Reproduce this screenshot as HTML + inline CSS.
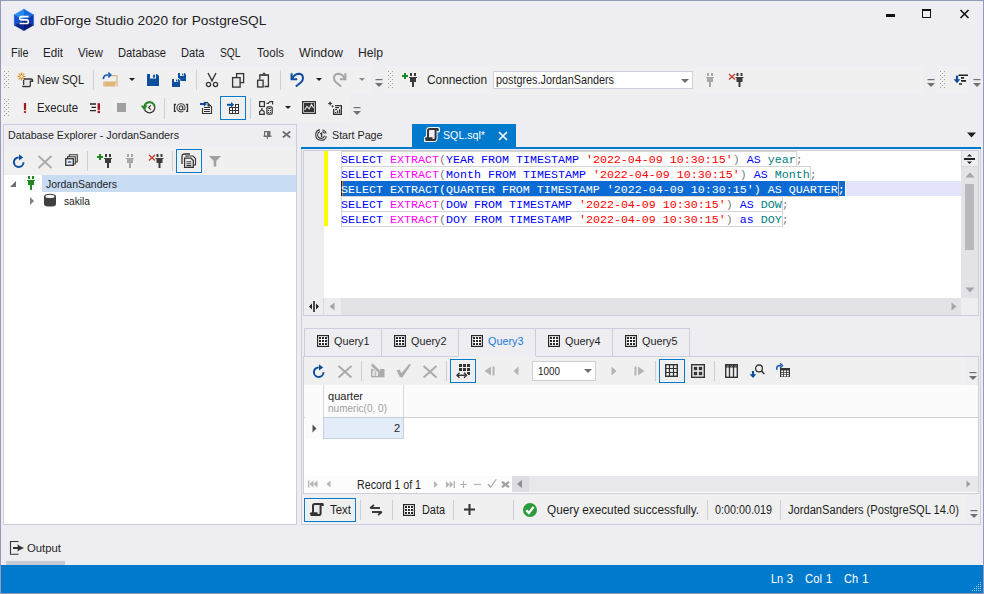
<!DOCTYPE html><html><head><meta charset="utf-8"><style>
*{margin:0;padding:0}
html,body{width:984px;height:594px;overflow:hidden;background:#EEEEF2}
body>div,body>span,body>svg{position:absolute;display:block}
.t{white-space:pre;position:absolute}
</style></head><body>
<div style="left:0px;top:0px;width:984px;height:594px;background:#EEEEF2"></div>
<svg style="left:13px;top:8px;" width="22" height="24" viewBox="0 0 22 24"><polygon points="10.9,11.9 1.2,6.7 10.9,0.9" fill="#2A8AEE" stroke="#2A8AEE" stroke-width="0.3"/><polygon points="10.9,11.9 10.9,0.9 20.6,6.7" fill="#1668DC" stroke="#1668DC" stroke-width="0.3"/><polygon points="10.9,11.9 1.2,17.3 1.2,6.7" fill="#1450D0" stroke="#1450D0" stroke-width="0.3"/><polygon points="10.9,11.9 20.6,6.7 20.6,17.3" fill="#0B3BB2" stroke="#0B3BB2" stroke-width="0.3"/><polygon points="10.9,11.9 10.9,22.8 1.2,17.3" fill="#0A2590" stroke="#0A2590" stroke-width="0.3"/><polygon points="10.9,11.9 20.6,17.3 10.9,22.8" fill="#071772" stroke="#071772" stroke-width="0.3"/><path d="M15.6 8.6 H8.8 Q6.7 8.6 6.7 10.3 Q6.7 11.9 8.8 11.9 H13.4 Q15.4 11.9 15.4 13.7 Q15.4 15.5 13.4 15.5 H6.5" fill="none" stroke="#fff" stroke-width="1.6"/></svg>
<span class="t" style="left:39.50px;top:14.00px;font-size:13.6px;line-height:13.6px;transform:scaleX(1.0087);transform-origin:0 0;color:#1E1E1E;font-family:'Liberation Sans', sans-serif;">dbForge Studio 2020 for PostgreSQL</span>
<div style="left:886px;top:14px;width:9px;height:3px;background:#111"></div>
<div style="left:922px;top:9px;width:9px;height:9px;border:1.5px solid #111;border-top-width:2.5px;box-sizing:border-box"></div>
<svg style="left:959px;top:9px;" width="11" height="10" viewBox="0 0 11 10"><path d="M1.5 1 L9.5 9 M9.5 1 L1.5 9" stroke="#111" stroke-width="1.6"/></svg>
<span class="t" style="left:10.50px;top:47.00px;font-size:12px;line-height:12px;transform:scaleX(0.9052);transform-origin:0 0;color:#1E1E1E;font-family:'Liberation Sans', sans-serif;">File</span>
<span class="t" style="left:43.00px;top:47.00px;font-size:12px;line-height:12px;transform:scaleX(0.9673);transform-origin:0 0;color:#1E1E1E;font-family:'Liberation Sans', sans-serif;">Edit</span>
<span class="t" style="left:78.00px;top:47.00px;font-size:12px;line-height:12px;transform:scaleX(0.9681);transform-origin:0 0;color:#1E1E1E;font-family:'Liberation Sans', sans-serif;">View</span>
<span class="t" style="left:118.00px;top:47.00px;font-size:12px;line-height:12px;transform:scaleX(0.9344);transform-origin:0 0;color:#1E1E1E;font-family:'Liberation Sans', sans-serif;">Database</span>
<span class="t" style="left:181.00px;top:47.00px;font-size:12px;line-height:12px;transform:scaleX(0.9268);transform-origin:0 0;color:#1E1E1E;font-family:'Liberation Sans', sans-serif;">Data</span>
<span class="t" style="left:220.00px;top:47.00px;font-size:12px;line-height:12px;transform:scaleX(0.8537);transform-origin:0 0;color:#1E1E1E;font-family:'Liberation Sans', sans-serif;">SQL</span>
<span class="t" style="left:257.00px;top:47.00px;font-size:12px;line-height:12px;transform:scaleX(0.9640);transform-origin:0 0;color:#1E1E1E;font-family:'Liberation Sans', sans-serif;">Tools</span>
<span class="t" style="left:299.00px;top:47.00px;font-size:12px;line-height:12px;transform:scaleX(1.0303);transform-origin:0 0;color:#1E1E1E;font-family:'Liberation Sans', sans-serif;">Window</span>
<span class="t" style="left:358.00px;top:47.00px;font-size:12px;line-height:12px;transform:scaleX(1.0128);transform-origin:0 0;color:#1E1E1E;font-family:'Liberation Sans', sans-serif;">Help</span>
<div style="left:1px;top:66px;width:371px;height:28px;background:#F0F0F0"></div>
<div style="left:385px;top:66px;width:539px;height:28px;background:#F0F0F0"></div>
<div style="left:937px;top:66px;width:32px;height:28px;background:#F0F0F0"></div>
<svg style="left:4px;top:71px;" width="5" height="17" viewBox="0 0 5 17"><rect x="0" y="0" width="1" height="1" fill="#A0A0A0"/><rect x="0" y="4" width="1" height="1" fill="#A0A0A0"/><rect x="0" y="8" width="1" height="1" fill="#A0A0A0"/><rect x="0" y="12" width="1" height="1" fill="#A0A0A0"/><rect x="0" y="16" width="1" height="1" fill="#A0A0A0"/><rect x="4" y="0" width="1" height="1" fill="#A0A0A0"/><rect x="4" y="4" width="1" height="1" fill="#A0A0A0"/><rect x="4" y="8" width="1" height="1" fill="#A0A0A0"/><rect x="4" y="12" width="1" height="1" fill="#A0A0A0"/><rect x="4" y="16" width="1" height="1" fill="#A0A0A0"/><rect x="2" y="2" width="1" height="1" fill="#A0A0A0"/><rect x="2" y="6" width="1" height="1" fill="#A0A0A0"/><rect x="2" y="10" width="1" height="1" fill="#A0A0A0"/><rect x="2" y="14" width="1" height="1" fill="#A0A0A0"/></svg>
<svg style="left:17px;top:72px;" width="17" height="17" viewBox="0 0 17 17"><g stroke="#D98A1C" stroke-width="1.2"><path d="M4.5 0.5 V8.5 M0.5 4.5 H8.5 M1.7 1.7 L7.3 7.3 M7.3 1.7 L1.7 7.3"/></g><circle cx="4.5" cy="4.5" r="1.3" fill="#F0F0F0"/><path d="M6.8 7 H14 Q15.5 7 15.5 8.3 V9.3 H13.2 V14.5" fill="none" stroke="#333" stroke-width="1.5"/><path d="M6.8 8 V13" stroke="#333" stroke-width="1.5"/><path d="M5 13.8 H12.5 Q13.2 13.8 13.2 14.5 V15.3 H6.5 Q5 15.3 5 14 Z" fill="#333"/><rect x="7.5" y="8" width="5" height="5.5" fill="#E4E4EA"/></svg>
<span class="t" style="left:37.00px;top:74.00px;font-size:12px;line-height:12px;transform:scaleX(0.9153);transform-origin:0 0;color:#1E1E1E;font-family:'Liberation Sans', sans-serif;">New SQL</span>
<div style="left:93px;top:70px;width:1px;height:20px;background:#CCCEDB"></div>
<svg style="left:102px;top:72px;" width="17" height="16" viewBox="0 0 17 16"><path d="M7.5 3.6 H15 V14.5" fill="none" stroke="#D8B27A" stroke-width="1.2"/><path d="M3.5 9.6 H14 L13 14.6 H2 Z" fill="#DDB678"/><path d="M1.3 9.8 L3.5 9.6 L2 14.6 L1.3 14.6 Z" fill="#DDB678"/><path d="M1.5 7.2 Q1 4 4.5 3 H8.5" fill="none" stroke="#1A5DB5" stroke-width="1.7"/><path d="M6.3 0.6 L8.8 3 L6.3 5.4" fill="none" stroke="#1A5DB5" stroke-width="1.5"/></svg>
<svg style="left:129px;top:78px;" width="6" height="4" viewBox="0 0 6 4"><path d="M0 0 H6 L3 3 Z" fill="#1E1E1E"/></svg>
<svg style="left:147px;top:74px;" width="12" height="12" viewBox="0 0 12 12"><path d="M0 0 H10 L12 2 V12 H0 Z" fill="#0D4F9E"/><rect x="3" y="0" width="6" height="4.5" fill="#F0F0F0"/><rect x="6" y="0.8" width="2" height="2.8" fill="#0D4F9E"/></svg>
<svg style="left:172px;top:73px;" width="15" height="14" viewBox="0 0 15 14"><path d="M6 0 H12.5 L14 1.5 V8 H6 Z" fill="#0D4F9E"/><rect x="8" y="0" width="4" height="3" fill="#F0F0F0"/><rect x="10" y="0.6" width="1.3" height="1.9" fill="#0D4F9E"/><path d="M-0.5 5.3 H7 L8.5 6.8 V14.5 H-0.5 Z" fill="#F0F0F0"/><path d="M0 6 H6.5 L8 7.5 V14 H0 Z" fill="#0D4F9E"/><rect x="2" y="6" width="4" height="3" fill="#F0F0F0"/><rect x="4" y="6.6" width="1.3" height="1.9" fill="#0D4F9E"/></svg>
<div style="left:196px;top:70px;width:1px;height:20px;background:#CCCEDB"></div>
<svg style="left:205px;top:72px;" width="14" height="16" viewBox="0 0 14 16"><path d="M3 1 L7.5 9.5 M11 1 L6.5 9.5" stroke="#333" stroke-width="1.4" fill="none"/><circle cx="3.5" cy="12.5" r="2.1" fill="none" stroke="#333" stroke-width="1.3"/><circle cx="10.5" cy="12.5" r="2.1" fill="none" stroke="#333" stroke-width="1.3"/></svg>
<svg style="left:231px;top:72px;" width="14" height="16" viewBox="0 0 14 16"><rect x="5.6" y="1.6" width="7" height="9" fill="none" stroke="#333" stroke-width="1.3"/><rect x="1.6" y="5.6" width="7.5" height="9.5" fill="#E9E9EE" stroke="#333" stroke-width="1.3"/></svg>
<svg style="left:256px;top:72px;" width="14" height="16" viewBox="0 0 14 16"><rect x="1.6" y="8.2" width="5.5" height="6.8" fill="#E9E9EE" stroke="#333" stroke-width="1.3"/><path d="M3.8 7.5 V3 H12.4 V14.5 H8.5" fill="none" stroke="#333" stroke-width="1.3"/><path d="M6.3 3 L8 1 L9.7 3 Z" fill="#E9E9EE" stroke="#333" stroke-width="1.1"/></svg>
<div style="left:280px;top:70px;width:1px;height:20px;background:#CCCEDB"></div>
<svg style="left:289px;top:72px;" width="16" height="16" viewBox="0 0 16 16"><path d="M2.6 1.2 V7.2 H8.2" fill="none" stroke="#0D4F9E" stroke-width="2.1"/><path d="M3 6.6 Q6 1.8 10 1.8 Q14 2.2 14 6.2 Q14 8.6 11.8 10.4 L6.8 14.6" fill="none" stroke="#0D4F9E" stroke-width="2"/></svg>
<svg style="left:316px;top:78px;" width="6" height="4" viewBox="0 0 6 4"><path d="M0 0 H6 L3 3 Z" fill="#1E1E1E"/></svg>
<svg style="left:332px;top:72px;" width="16" height="16" viewBox="0 0 16 16"><g transform="translate(16,0) scale(-1,1)"><path d="M2.6 1.2 V7.2 H8.2" fill="none" stroke="#A6A6A6" stroke-width="2.1"/><path d="M3 6.6 Q6 1.8 10 1.8 Q14 2.2 14 6.2 Q14 8.6 11.8 10.4 L6.8 14.6" fill="none" stroke="#A6A6A6" stroke-width="2"/></g></svg>
<svg style="left:359px;top:78px;" width="6" height="4" viewBox="0 0 6 4"><path d="M0 0 H6 L3 3 Z" fill="#8C8C8C"/></svg>
<div style="left:372px;top:66px;width:13px;height:28px;background:#EEEEF2"></div>
<svg style="left:375px;top:79px;" width="8" height="10" viewBox="0 0 8 10"><rect x="0.5" y="0" width="7" height="1.2" fill="#717171"/><path d="M0 4 H8 L4 8 Z" fill="#717171"/></svg>
<svg style="left:388px;top:71px;" width="5" height="17" viewBox="0 0 5 17"><rect x="0" y="0" width="1" height="1" fill="#A0A0A0"/><rect x="0" y="4" width="1" height="1" fill="#A0A0A0"/><rect x="0" y="8" width="1" height="1" fill="#A0A0A0"/><rect x="0" y="12" width="1" height="1" fill="#A0A0A0"/><rect x="0" y="16" width="1" height="1" fill="#A0A0A0"/><rect x="4" y="0" width="1" height="1" fill="#A0A0A0"/><rect x="4" y="4" width="1" height="1" fill="#A0A0A0"/><rect x="4" y="8" width="1" height="1" fill="#A0A0A0"/><rect x="4" y="12" width="1" height="1" fill="#A0A0A0"/><rect x="4" y="16" width="1" height="1" fill="#A0A0A0"/><rect x="2" y="2" width="1" height="1" fill="#A0A0A0"/><rect x="2" y="6" width="1" height="1" fill="#A0A0A0"/><rect x="2" y="10" width="1" height="1" fill="#A0A0A0"/><rect x="2" y="14" width="1" height="1" fill="#A0A0A0"/></svg>
<svg style="left:401px;top:73px;" width="16" height="14" viewBox="0 0 16 14"><path d="M1 3 H7 M4 0 V6" stroke="#1E8A1E" stroke-width="2"/><g fill="#3C3C3C" transform="translate(8,0)"><rect x="1" y="0" width="2" height="3"/><rect x="5" y="0" width="2" height="3"/><rect x="0" y="4" width="8" height="1"/><rect x="1" y="4" width="6" height="5"/><rect x="3" y="9" width="2" height="5"/></g></svg>
<span class="t" style="left:427.00px;top:74.00px;font-size:12px;line-height:12px;transform:scaleX(0.9883);transform-origin:0 0;color:#1E1E1E;font-family:'Liberation Sans', sans-serif;">Connection</span>
<div style="left:493px;top:71px;width:200px;height:18px;background:#fff;border:1px solid #CCCEDB;box-sizing:border-box"></div>
<span class="t" style="left:496.00px;top:74.00px;font-size:12px;line-height:12px;transform:scaleX(0.9025);transform-origin:0 0;color:#1E1E1E;font-family:'Liberation Sans', sans-serif;">postgres.JordanSanders</span>
<svg style="left:681px;top:79px;" width="8" height="5" viewBox="0 0 8 5"><path d="M0 0 H8 L4 4 Z" fill="#6E6E6E"/></svg>
<svg style="left:705px;top:73px;" width="10" height="15" viewBox="0 0 10 15"><g fill="#A8A8A8" transform="translate(1,0)"><rect x="1" y="0" width="2" height="3"/><rect x="5" y="0" width="2" height="3"/><rect x="0" y="4" width="8" height="1"/><rect x="1" y="4" width="6" height="5"/><rect x="3" y="9" width="2" height="5"/></g></svg>
<svg style="left:728px;top:73px;" width="16" height="14" viewBox="0 0 16 14"><path d="M1 1 L7 6.5 M7 1 L1 6.5" stroke="#C0392B" stroke-width="1.3"/><g fill="#3C3C3C" transform="translate(7.5,0)"><rect x="1" y="0" width="2" height="3"/><rect x="5" y="0" width="2" height="3"/><rect x="0" y="4" width="8" height="1"/><rect x="1" y="4" width="6" height="5"/><rect x="3" y="9" width="2" height="5"/></g></svg>
<div style="left:924px;top:66px;width:13px;height:28px;background:#EEEEF2"></div>
<svg style="left:927px;top:79px;" width="8" height="10" viewBox="0 0 8 10"><rect x="0.5" y="0" width="7" height="1.2" fill="#717171"/><path d="M0 4 H8 L4 8 Z" fill="#717171"/></svg>
<svg style="left:940px;top:71px;" width="5" height="17" viewBox="0 0 5 17"><rect x="0" y="0" width="1" height="1" fill="#A0A0A0"/><rect x="0" y="4" width="1" height="1" fill="#A0A0A0"/><rect x="0" y="8" width="1" height="1" fill="#A0A0A0"/><rect x="0" y="12" width="1" height="1" fill="#A0A0A0"/><rect x="0" y="16" width="1" height="1" fill="#A0A0A0"/><rect x="4" y="0" width="1" height="1" fill="#A0A0A0"/><rect x="4" y="4" width="1" height="1" fill="#A0A0A0"/><rect x="4" y="8" width="1" height="1" fill="#A0A0A0"/><rect x="4" y="12" width="1" height="1" fill="#A0A0A0"/><rect x="4" y="16" width="1" height="1" fill="#A0A0A0"/><rect x="2" y="2" width="1" height="1" fill="#A0A0A0"/><rect x="2" y="6" width="1" height="1" fill="#A0A0A0"/><rect x="2" y="10" width="1" height="1" fill="#A0A0A0"/><rect x="2" y="14" width="1" height="1" fill="#A0A0A0"/></svg>
<svg style="left:953px;top:73px;" width="16" height="13" viewBox="0 0 16 13"><path d="M5.5 2.2 H15 M8 4.9 H11 M8 7.9 H13 M6 11 H9" stroke="#222" stroke-width="1.6"/><path d="M4 2.6 V7.5" stroke="#0D4F9E" stroke-width="2.2"/><path d="M0.6 6.3 H7.4 L4 10.3 Z" fill="#0D4F9E"/></svg>
<svg style="left:973px;top:79px;" width="8" height="10" viewBox="0 0 8 10"><rect x="0.5" y="0" width="7" height="1.2" fill="#717171"/><path d="M0 4 H8 L4 8 Z" fill="#717171"/></svg>
<div style="left:1px;top:94px;width:349px;height:28px;background:#F0F0F0"></div>
<svg style="left:4px;top:99px;" width="5" height="17" viewBox="0 0 5 17"><rect x="0" y="0" width="1" height="1" fill="#A0A0A0"/><rect x="0" y="4" width="1" height="1" fill="#A0A0A0"/><rect x="0" y="8" width="1" height="1" fill="#A0A0A0"/><rect x="0" y="12" width="1" height="1" fill="#A0A0A0"/><rect x="0" y="16" width="1" height="1" fill="#A0A0A0"/><rect x="4" y="0" width="1" height="1" fill="#A0A0A0"/><rect x="4" y="4" width="1" height="1" fill="#A0A0A0"/><rect x="4" y="8" width="1" height="1" fill="#A0A0A0"/><rect x="4" y="12" width="1" height="1" fill="#A0A0A0"/><rect x="4" y="16" width="1" height="1" fill="#A0A0A0"/><rect x="2" y="2" width="1" height="1" fill="#A0A0A0"/><rect x="2" y="6" width="1" height="1" fill="#A0A0A0"/><rect x="2" y="10" width="1" height="1" fill="#A0A0A0"/><rect x="2" y="14" width="1" height="1" fill="#A0A0A0"/></svg>
<svg style="left:23px;top:102px;" width="4" height="12" viewBox="0 0 4 12"><rect x="0.9" y="1" width="2.2" height="7" fill="#A61B0E"/><rect x="0.9" y="9.1" width="2.2" height="1.8" fill="#A61B0E"/></svg>
<span class="t" style="left:37.00px;top:102.00px;font-size:12px;line-height:12px;transform:scaleX(0.9457);transform-origin:0 0;color:#1E1E1E;font-family:'Liberation Sans', sans-serif;">Execute</span>
<svg style="left:89px;top:102px;" width="13" height="12" viewBox="0 0 13 12"><path d="M1 2 H7 M2.5 5.4 H7 M1 8.6 H7" stroke="#222" stroke-width="1.3"/><rect x="8.6" y="1.2" width="2.4" height="6.6" fill="#A31515"/><rect x="8.6" y="8.8" width="2.4" height="2.3" fill="#A31515"/></svg>
<div style="left:117px;top:103px;width:9px;height:9px;background:#A0A0A0"></div>
<svg style="left:139px;top:100px;" width="18" height="15" viewBox="0 0 18 15"><circle cx="10.5" cy="7.5" r="5.3" fill="#F0F0F0" stroke="#333" stroke-width="1.2"/><path d="M11.8 5.3 L9.6 7.5 L11.8 9.7" fill="none" stroke="#333" stroke-width="1.1"/><path d="M15.6 6.5 A5.3 5.3 0 0 0 5.5 5.5" fill="none" stroke="#2A8A2A" stroke-width="1.9"/><path d="M1.8 5.8 L8.5 5.2 L5.6 10.8 Z" fill="#2A8A2A"/></svg>
<div style="left:164px;top:98px;width:1px;height:21px;background:#CCCEDB"></div>
<svg style="left:173px;top:102px;" width="16" height="11" viewBox="0 0 16 11"><path d="M3 2.5 H1.5 V9.4 H3 M13 2.5 H14.5 V9.4 H13" fill="none" stroke="#333" stroke-width="1.3"/><path d="M10.3 9.2 Q8.9 9.9 8 9.9 A4.1 4.1 0 1 1 12.1 5.8 Q12.1 8 10.8 8 Q9.8 8 9.8 6.8 V3.8" fill="none" stroke="#444" stroke-width="1.1"/><ellipse cx="7.9" cy="5.9" rx="1.7" ry="2" fill="none" stroke="#444" stroke-width="1.1"/></svg>
<svg style="left:199px;top:100px;" width="14" height="15" viewBox="0 0 14 15"><path d="M3.5 8 V13.5 H12.5 V6" fill="none" stroke="#333" stroke-width="1.1"/><path d="M8.5 2 L13 6.5 H8.5 Z" fill="#333"/><path d="M9 2.5 H5.5" stroke="#333" stroke-width="1.1"/><path d="M5 7.5 H11 M5 9.5 H11 M5 11.5 H11" stroke="#333" stroke-width="1"/><path d="M1 4 H5.5" stroke="#0D4F9E" stroke-width="2"/><path d="M4.8 1.2 L8 4 L4.8 6.8 Z" fill="#0D4F9E"/></svg>
<div style="left:220px;top:96px;width:26px;height:24px;border:1px solid #007ACC;box-sizing:border-box;background:#EFEFEF;box-shadow:inset 0 0 0 1px #F6F2EE"></div>
<svg style="left:227px;top:100px;" width="13" height="15" viewBox="0 0 13 15"><path d="M8 4 H12 V14 H2 V7 H8 Z" fill="#333"/><rect x="9" y="5" width="2" height="2" fill="#fff"/><rect x="3" y="8" width="2" height="2" fill="#fff"/><rect x="6" y="8" width="2" height="2" fill="#fff"/><rect x="9" y="8" width="2" height="2" fill="#fff"/><rect x="3" y="11" width="2" height="2" fill="#fff"/><rect x="6" y="11" width="2" height="2" fill="#fff"/><rect x="9" y="11" width="2" height="2" fill="#fff"/><path d="M0 4.8 H4.5" stroke="#0D4F9E" stroke-width="2"/><path d="M4 2 L7.2 4.8 L4 7.6 Z" fill="#0D4F9E"/></svg>
<div style="left:250px;top:98px;width:1px;height:21px;background:#CCCEDB"></div>
<svg style="left:258px;top:100px;" width="16" height="16" viewBox="0 0 16 16"><g fill="none" stroke="#333" stroke-width="1.2"><rect x="1.6" y="1.6" width="4.8" height="4.9"/><path d="M1.6 14.4 V11.8 L3.9 9.6 L6.2 11.8 V14.4 Z M3.9 8 V9.8"/><path d="M8.5 3.4 H10.2 L12 1.6 H14.6 V4.6"/><rect x="8.9" y="6.9" width="5.3" height="7.3" rx="1.1"/><path d="M10.3 8.5 H12.6" stroke-width="1"/></g><circle cx="10.5" cy="10.4" r="0.65" fill="#333"/><circle cx="10.5" cy="12.4" r="0.65" fill="#333"/><circle cx="12.5" cy="10.4" r="0.65" fill="#333"/><circle cx="12.5" cy="12.4" r="0.65" fill="#333"/></svg>
<svg style="left:285px;top:106px;" width="6" height="4" viewBox="0 0 6 4"><path d="M0 0 H6 L3 3 Z" fill="#1E1E1E"/></svg>
<svg style="left:301px;top:100px;" width="16" height="15" viewBox="0 0 16 15"><rect x="1" y="1" width="14" height="13" fill="#333"/><rect x="2.3" y="2.3" width="11.4" height="10.4" fill="#F0F0F0"/><rect x="3" y="3" width="10" height="9" fill="#333"/><path d="M3.6 10 L6 6.3 L8.2 8.8 L10.5 4.5 L12.5 8" fill="none" stroke="#E8E8E8" stroke-width="1.1"/></svg>
<svg style="left:327px;top:101px;" width="17" height="15" viewBox="0 0 17 15"><path d="M3.1 0 Q3.5 2.1 5.6 2.5 Q3.5 2.9 3.1 5 Q2.7 2.9 0.6 2.5 Q2.7 2.1 3.1 0 Z" fill="#333"/><path d="M5.6 4 L6.9 5.3 L5.6 6.6 L4.3 5.3 Z" fill="#333"/><path d="M8 4.65 H14.35 V13.35 H6.65 V8" fill="none" stroke="#333" stroke-width="1.3"/><path d="M8.2 6.6 H12 M8.2 8.6 H10" stroke="#333" stroke-width="1.1"/><rect x="8" y="11" width="1.3" height="1.3" fill="#333"/><rect x="10" y="9.6" width="1.2" height="2.8" fill="#333"/><rect x="12" y="8.2" width="1.2" height="4.2" fill="#333"/></svg>
<div style="left:350px;top:94px;width:16px;height:28px;background:#EEEEF2"></div>
<svg style="left:353px;top:107px;" width="8" height="10" viewBox="0 0 8 10"><rect x="0.5" y="0" width="7" height="1.2" fill="#717171"/><path d="M0 4 H8 L4 8 Z" fill="#717171"/></svg>
<div style="left:3px;top:124px;width:294px;height:401px;border:1px solid #CCCEDB;box-sizing:border-box;background:#fff"></div>
<div style="left:4px;top:125px;width:292px;height:21px;background:#EEEEF2"></div>
<span class="t" style="left:8.00px;top:130.00px;font-size:11px;line-height:11px;transform:scaleX(0.9745);transform-origin:0 0;color:#1E1E1E;font-family:'Liberation Sans', sans-serif;">Database Explorer - JordanSanders</span>
<svg style="left:263px;top:131px;" width="9" height="8" viewBox="0 0 9 8"><rect x="1.6" y="0.6" width="5.3" height="4.8" fill="none" stroke="#6E6E6E" stroke-width="1.2"/><rect x="4" y="0.6" width="2.9" height="4.8" fill="#6E6E6E"/><path d="M0.5 5.3 H8.5" stroke="#6E6E6E" stroke-width="1.3"/><path d="M4.3 5.3 V8" stroke="#6E6E6E" stroke-width="1.2"/></svg>
<svg style="left:282px;top:131px;" width="9" height="7" viewBox="0 0 9 7"><path d="M0.8 0.5 L8.2 6.5 M8.2 0.5 L0.8 6.5" stroke="#6E6E6E" stroke-width="1.8"/></svg>
<div style="left:4px;top:146px;width:292px;height:29px;background:#F0F0F0"></div>
<svg style="left:12px;top:154px;" width="14" height="15" viewBox="0 0 14 15"><path d="M11.5 8.2 A4.8 4.8 0 1 1 6.7 3.4" fill="none" stroke="#0D4F9E" stroke-width="2"/><path d="M7 0.2 L11.2 3.4 L7 6.6 Z" fill="#0D4F9E"/></svg>
<svg style="left:37px;top:155px;" width="16" height="14" viewBox="0 0 16 14"><path d="M1.5 1 L14.5 13 M14.5 1 L1.5 13" stroke="#ABABAB" stroke-width="1.9"/></svg>
<svg style="left:65px;top:154px;" width="13" height="12" viewBox="0 0 13 12"><path d="M4.3 3 V0.7 H12.3 V8 H10.5" fill="none" stroke="#333" stroke-width="1.1"/><path d="M2.5 5 V2.7 H10.3 V10 H8" fill="none" stroke="#333" stroke-width="1.1"/><rect x="0.7" y="4.7" width="7.6" height="6.6" fill="#F0F0F0" stroke="#333" stroke-width="1.3"/><path d="M2.8 8 H6.2" stroke="#1A5DB5" stroke-width="1.4"/></svg>
<div style="left:87px;top:151px;width:1px;height:20px;background:#CCCEDB"></div>
<svg style="left:96px;top:154px;" width="16" height="14" viewBox="0 0 16 14"><path d="M1 3 H7 M4 0 V6" stroke="#1E8A1E" stroke-width="2"/><g fill="#3C3C3C" transform="translate(8,0)"><rect x="1" y="0" width="2" height="3"/><rect x="5" y="0" width="2" height="3"/><rect x="0" y="4" width="8" height="1"/><rect x="1" y="4" width="6" height="5"/><rect x="3" y="9" width="2" height="5"/></g></svg>
<svg style="left:125px;top:154px;" width="10" height="15" viewBox="0 0 10 15"><g fill="#A8A8A8" transform="translate(1,0)"><rect x="1" y="0" width="2" height="3"/><rect x="5" y="0" width="2" height="3"/><rect x="0" y="4" width="8" height="1"/><rect x="1" y="4" width="6" height="5"/><rect x="3" y="9" width="2" height="5"/></g></svg>
<svg style="left:148px;top:154px;" width="16" height="14" viewBox="0 0 16 14"><path d="M1 1 L7 6.5 M7 1 L1 6.5" stroke="#C0392B" stroke-width="1.3"/><g fill="#3C3C3C" transform="translate(7.5,0)"><rect x="1" y="0" width="2" height="3"/><rect x="5" y="0" width="2" height="3"/><rect x="0" y="4" width="8" height="1"/><rect x="1" y="4" width="6" height="5"/><rect x="3" y="9" width="2" height="5"/></g></svg>
<div style="left:172px;top:151px;width:1px;height:20px;background:#CCCEDB"></div>
<div style="left:176px;top:149px;width:26px;height:24px;border:1px solid #007ACC;box-sizing:border-box;background:#EFEFEF;box-shadow:inset 0 0 0 1px #F6F2EE"></div>
<svg style="left:181px;top:153px;" width="16" height="15" viewBox="0 0 16 15"><path d="M1 11 V3.5 Q1 1 3.5 1 H9" fill="none" stroke="#333" stroke-width="1.3"/><path d="M5 4 V3 H12 L14.5 5.5 V12 H13" fill="none" stroke="#333" stroke-width="1.1"/><path d="M3.6 5.2 H10 L12.3 7.5 V14.3 H3.6 Z" fill="#EFEFEF" stroke="#333" stroke-width="1.3"/><path d="M5.5 8.8 H10.3 M5.5 10.8 H10.3 M5.5 12.6 H10.3" stroke="#333" stroke-width="1.1"/></svg>
<svg style="left:209px;top:156px;" width="12" height="11" viewBox="0 0 12 11"><path d="M0 0 H12 L7.3 5 V10.5 H4.7 V5 Z" fill="#A0A0A0"/></svg>
<div style="left:42px;top:175px;width:254px;height:17px;background:#C8DCF4"></div>
<svg style="left:10px;top:181px;" width="7" height="6" viewBox="0 0 7 6"><path d="M6 0 V6 H0 Z" fill="#6E6E6E"/></svg>
<svg style="left:27px;top:176px;" width="9" height="15" viewBox="0 0 9 15"><g fill="#1E8A1E"><rect x="1" y="0" width="2" height="3"/><rect x="5" y="0" width="2" height="3"/><rect x="0" y="4" width="8" height="1"/><rect x="1" y="4" width="6" height="5"/><rect x="3" y="9" width="2" height="5"/></g></svg>
<span class="t" style="left:46.00px;top:179.00px;font-size:11px;line-height:11px;transform:scaleX(0.9517);transform-origin:0 0;color:#1E1E1E;font-family:'Liberation Sans', sans-serif;">JordanSanders</span>
<svg style="left:30px;top:197px;" width="4" height="8" viewBox="0 0 4 8"><path d="M0 0 L4 4 L0 8 Z" fill="#808080"/></svg>
<svg style="left:43px;top:193px;" width="14" height="14" viewBox="0 0 14 14"><path d="M1 3 V11 Q1 13.6 7 13.6 Q13 13.6 13 11 V3 Z" fill="#404040"/><ellipse cx="7" cy="3.3" rx="6" ry="2.6" fill="#404040"/><ellipse cx="7" cy="3.4" rx="4.6" ry="1.6" fill="#F4F4F4"/></svg>
<span class="t" style="left:64.00px;top:196.00px;font-size:11px;line-height:11px;transform:scaleX(0.9240);transform-origin:0 0;color:#1E1E1E;font-family:'Liberation Sans', sans-serif;">sakila</span>
<svg style="left:314px;top:128px;" width="14" height="14" viewBox="0 0 14 14"><path d="M12.38 8.02 A5.4 5.4 0 1 1 5.98 1.62 M8.50 1.68 A5.4 5.4 0 0 1 12.32 5.50 M10.52 7.63 A3.5 3.5 0 1 1 5.90 3.61" fill="none" stroke="#3A3A3A" stroke-width="1.1"/><path d="M8.6 3.3 L10.6 5.3" stroke="#3A3A3A" stroke-width="1.1"/><path d="M6.1 6 L7.6 5.2 V9" fill="none" stroke="#333" stroke-width="1.3"/></svg>
<span class="t" style="left:331.50px;top:130.00px;font-size:11px;line-height:11px;transform:scaleX(0.9716);transform-origin:0 0;color:#1E1E1E;font-family:'Liberation Sans', sans-serif;">Start Page</span>
<div style="left:412px;top:124px;width:104px;height:23px;background:#007ACC"></div>
<svg style="left:424px;top:127px;" width="16" height="15" viewBox="0 0 16 15"><path d="M4 10.5 V3.8 Q4 2 5.8 2 H13.2 M11.6 3 V11.3 Q11.6 13.1 9.8 13.1 H1.5 M1.6 12.3 Q1.6 11.3 2.8 11.3 H8.5" fill="none" stroke="#F4F6FA" stroke-width="4" stroke-linecap="round"/><rect x="11" y="0" width="5" height="5.5" rx="1.5" fill="#F4F6FA"/><rect x="5" y="3" width="5.8" height="8.5" fill="#EEEEF2"/><path d="M4 10.5 V3.8 Q4 2 5.8 2 H13.2 M11.6 3 V11.3 Q11.6 13.1 9.8 13.1 H1.5 M1.6 12.3 Q1.6 11.3 2.8 11.3 H8.5" fill="none" stroke="#333" stroke-width="2"/><path d="M12.5 1 H13.6 Q14.7 1 14.7 2.2 V4 H12.5 Z" fill="#333"/></svg>
<span class="t" style="left:443.00px;top:130.00px;font-size:11px;line-height:11px;transform:scaleX(0.9676);transform-origin:0 0;color:#fff;font-family:'Liberation Sans', sans-serif;">SQL.sql*</span>
<svg style="left:498px;top:131px;" width="10" height="10" viewBox="0 0 10 10"><path d="M1 1 L9 9 M9 1 L1 9" stroke="#fff" stroke-width="1.7"/></svg>
<svg style="left:967px;top:132px;" width="9" height="6" viewBox="0 0 9 6"><path d="M0 0.5 H9 L4.5 5.5 Z" fill="#1E1E1E"/></svg>
<div style="left:301px;top:147px;width:680px;height:2px;background:#007ACC"></div>
<div style="left:301px;top:149px;width:680px;height:376px;background:#EEEEF2"></div>
<div style="left:301px;top:149px;width:1px;height:376px;background:#CCCEDB"></div>
<div style="left:980px;top:149px;width:1px;height:376px;background:#CCCEDB"></div>
<div style="left:301px;top:524px;width:680px;height:1px;background:#CCCEDB"></div>
<div style="left:303px;top:150px;width:676px;height:166px;border:1px solid #CCCEDB;box-sizing:border-box;background:#fff"></div>
<div style="left:304px;top:151px;width:20px;height:147px;background:#EEEEF2"></div>
<div style="left:324px;top:151px;width:4px;height:75px;background:#FFFF00"></div>
<div style="left:846px;top:181px;width:115px;height:15px;background:#E3E3FB"></div>
<div style="left:341px;top:151px;width:456px;height:16px;border:1px solid #D4D4D4;box-sizing:border-box"></div>
<div style="left:341px;top:166px;width:470px;height:16px;border:1px solid #D4D4D4;box-sizing:border-box"></div>
<div style="left:341px;top:181px;width:498px;height:16px;border:1px solid #D4D4D4;box-sizing:border-box"></div>
<div style="left:341px;top:196px;width:442px;height:16px;border:1px solid #D4D4D4;box-sizing:border-box"></div>
<div style="left:341px;top:211px;width:442px;height:16px;border:1px solid #D4D4D4;box-sizing:border-box"></div>
<div style="left:341px;top:181px;width:504px;height:15px;background:#0B6AD3"></div>
<div style="left:838px;top:181px;width:1px;height:16px;background:#CFC6B8"></div>
<div style="left:341px;top:181px;width:2px;height:15px;background:#E07A2A;border-left:1px solid #222;box-sizing:border-box"></div>
<span class="t" style="left:341px;top:155.0px;font-size:11.67px;line-height:11.67px;font-family:'Liberation Mono', monospace;"><b style="color:#0000FF;font-weight:normal">SELECT</b> <b style="color:#FF00FF;font-weight:normal">EXTRACT</b><b style="color:#808080;font-weight:normal">(</b><b style="color:#0000FF;font-weight:normal">YEAR</b> <b style="color:#0000FF;font-weight:normal">FROM</b> <b style="color:#0000FF;font-weight:normal">TIMESTAMP</b> <b style="color:#FF0000;font-weight:normal">'2022-04-09 10:30:15'</b><b style="color:#808080;font-weight:normal">)</b> <b style="color:#0000FF;font-weight:normal">AS</b> <b style="color:#008080;font-weight:normal">year</b><b style="color:#808080;font-weight:normal">;</b></span>
<span class="t" style="left:341px;top:170.0px;font-size:11.67px;line-height:11.67px;font-family:'Liberation Mono', monospace;"><b style="color:#0000FF;font-weight:normal">SELECT</b> <b style="color:#FF00FF;font-weight:normal">EXTRACT</b><b style="color:#808080;font-weight:normal">(</b><b style="color:#0000FF;font-weight:normal">Month</b> <b style="color:#0000FF;font-weight:normal">FROM</b> <b style="color:#0000FF;font-weight:normal">TIMESTAMP</b> <b style="color:#FF0000;font-weight:normal">'2022-04-09 10:30:15'</b><b style="color:#808080;font-weight:normal">)</b> <b style="color:#0000FF;font-weight:normal">AS</b> <b style="color:#008080;font-weight:normal">Month</b><b style="color:#808080;font-weight:normal">;</b></span>
<span class="t" style="left:341px;top:185.0px;font-size:11.67px;line-height:11.67px;font-family:'Liberation Mono', monospace;color:#fff">SELECT EXTRACT(QUARTER FROM TIMESTAMP '2022-04-09 10:30:15') AS QUARTER;</span>
<span class="t" style="left:341px;top:200.0px;font-size:11.67px;line-height:11.67px;font-family:'Liberation Mono', monospace;"><b style="color:#0000FF;font-weight:normal">SELECT</b> <b style="color:#FF00FF;font-weight:normal">EXTRACT</b><b style="color:#808080;font-weight:normal">(</b><b style="color:#0000FF;font-weight:normal">DOW</b> <b style="color:#0000FF;font-weight:normal">FROM</b> <b style="color:#0000FF;font-weight:normal">TIMESTAMP</b> <b style="color:#FF0000;font-weight:normal">'2022-04-09 10:30:15'</b><b style="color:#808080;font-weight:normal">)</b> <b style="color:#0000FF;font-weight:normal">AS</b> <b style="color:#008080;font-weight:normal">DOW</b><b style="color:#808080;font-weight:normal">;</b></span>
<span class="t" style="left:341px;top:215.0px;font-size:11.67px;line-height:11.67px;font-family:'Liberation Mono', monospace;"><b style="color:#0000FF;font-weight:normal">SELECT</b> <b style="color:#FF00FF;font-weight:normal">EXTRACT</b><b style="color:#808080;font-weight:normal">(</b><b style="color:#0000FF;font-weight:normal">DOY</b> <b style="color:#0000FF;font-weight:normal">FROM</b> <b style="color:#0000FF;font-weight:normal">TIMESTAMP</b> <b style="color:#FF0000;font-weight:normal">'2022-04-09 10:30:15'</b><b style="color:#808080;font-weight:normal">)</b> <b style="color:#0000FF;font-weight:normal">as</b> <b style="color:#008080;font-weight:normal">DOY</b><b style="color:#808080;font-weight:normal">;</b></span>
<div style="left:961px;top:151px;width:17px;height:147px;background:#E2E2E7"></div>
<div style="left:961px;top:151px;width:17px;height:16px;background:#EEEEF2;border-left:1px solid #D8D8E0;border-bottom:1px solid #D8D8E0;box-sizing:border-box"></div>
<svg style="left:963px;top:153px;" width="13" height="12" viewBox="0 0 13 12"><path d="M6.5 1 L9 3.5 H4 Z" fill="#222"/><rect x="1" y="5" width="11" height="2" fill="#222"/><path d="M4 8.5 H9 L6.5 11 Z" fill="#222"/></svg>
<svg style="left:965px;top:172px;" width="10" height="6" viewBox="0 0 10 6"><path d="M0.5 5.5 L5 0.5 L9.5 5.5 Z" fill="#A4A4AC"/></svg>
<div style="left:965px;top:184px;width:9px;height:66px;background:#B9B9BD"></div>
<svg style="left:965px;top:287px;" width="10" height="6" viewBox="0 0 10 6"><path d="M0.5 0.5 H9.5 L5 5.5 Z" fill="#A4A4AC"/></svg>
<div style="left:304px;top:298px;width:674px;height:17px;background:#E2E2E7"></div>
<div style="left:304px;top:298px;width:20px;height:17px;background:#EEEEF2;border-right:1px solid #D8D8E0;box-sizing:border-box"></div>
<svg style="left:309px;top:301px;" width="10" height="11" viewBox="0 0 10 11"><path d="M3 2.5 V8.5 L0 5.5 Z M7 2.5 V8.5 L10 5.5 Z" fill="#222"/><rect x="4.2" y="0" width="1.6" height="11" fill="#222"/></svg>
<div style="left:324px;top:298px;width:17px;height:17px;background:#EDEDF0"></div>
<svg style="left:329px;top:302px;" width="6" height="9" viewBox="0 0 6 9"><path d="M5.5 0.5 V8.5 L0.5 4.5 Z" fill="#A4A4AC"/></svg>
<svg style="left:951px;top:302px;" width="6" height="9" viewBox="0 0 6 9"><path d="M0.5 0.5 V8.5 L5.5 4.5 Z" fill="#A4A4AC"/></svg>
<div style="left:961px;top:298px;width:17px;height:17px;background:#EEEEF2"></div>
<div style="left:304px;top:328px;width:78px;height:29px;background:#EEEEF2;border:1px solid #CCCEDB;box-sizing:border-box"></div>
<svg style="left:317px;top:335px;" width="12" height="12" viewBox="0 0 12 12"><rect x="0.6" y="0.6" width="10.8" height="10.8" fill="#fff" stroke="#262626" stroke-width="1.2"/><rect x="2" y="2" width="2" height="2" fill="#262626"/><rect x="2" y="5" width="2" height="2" fill="#262626"/><rect x="2" y="8" width="2" height="2" fill="#262626"/><rect x="5" y="2" width="2" height="2" fill="#262626"/><rect x="5" y="5" width="2" height="2" fill="#262626"/><rect x="5" y="8" width="2" height="2" fill="#262626"/><rect x="8" y="2" width="2" height="2" fill="#262626"/><rect x="8" y="5" width="2" height="2" fill="#262626"/><rect x="8" y="8" width="2" height="2" fill="#262626"/></svg>
<span class="t" style="left:333.50px;top:336.00px;font-size:11px;line-height:11px;transform:scaleX(0.9842);transform-origin:0 0;color:#1E1E1E;font-family:'Liberation Sans', sans-serif;">Query1</span>
<div style="left:381px;top:328px;width:78px;height:29px;background:#EEEEF2;border:1px solid #CCCEDB;box-sizing:border-box"></div>
<svg style="left:394px;top:335px;" width="12" height="12" viewBox="0 0 12 12"><rect x="0.6" y="0.6" width="10.8" height="10.8" fill="#fff" stroke="#262626" stroke-width="1.2"/><rect x="2" y="2" width="2" height="2" fill="#262626"/><rect x="2" y="5" width="2" height="2" fill="#262626"/><rect x="2" y="8" width="2" height="2" fill="#262626"/><rect x="5" y="2" width="2" height="2" fill="#262626"/><rect x="5" y="5" width="2" height="2" fill="#262626"/><rect x="5" y="8" width="2" height="2" fill="#262626"/><rect x="8" y="2" width="2" height="2" fill="#262626"/><rect x="8" y="5" width="2" height="2" fill="#262626"/><rect x="8" y="8" width="2" height="2" fill="#262626"/></svg>
<span class="t" style="left:410.50px;top:336.00px;font-size:11px;line-height:11px;transform:scaleX(0.9842);transform-origin:0 0;color:#1E1E1E;font-family:'Liberation Sans', sans-serif;">Query2</span>
<div style="left:458px;top:328px;width:78px;height:29px;background:#EEEEF2;border:1px solid #CCCEDB;border-bottom:none;box-sizing:border-box"></div>
<svg style="left:471px;top:335px;" width="12" height="12" viewBox="0 0 12 12"><rect x="0.6" y="0.6" width="10.8" height="10.8" fill="#fff" stroke="#262626" stroke-width="1.2"/><rect x="2" y="2" width="2" height="2" fill="#262626"/><rect x="2" y="5" width="2" height="2" fill="#262626"/><rect x="2" y="8" width="2" height="2" fill="#262626"/><rect x="5" y="2" width="2" height="2" fill="#262626"/><rect x="5" y="5" width="2" height="2" fill="#262626"/><rect x="5" y="8" width="2" height="2" fill="#262626"/><rect x="8" y="2" width="2" height="2" fill="#262626"/><rect x="8" y="5" width="2" height="2" fill="#262626"/><rect x="8" y="8" width="2" height="2" fill="#262626"/></svg>
<span class="t" style="left:487.50px;top:336.00px;font-size:11px;line-height:11px;transform:scaleX(0.9842);transform-origin:0 0;color:#1C7CD6;font-family:'Liberation Sans', sans-serif;">Query3</span>
<div style="left:535px;top:328px;width:78px;height:29px;background:#EEEEF2;border:1px solid #CCCEDB;box-sizing:border-box"></div>
<svg style="left:548px;top:335px;" width="12" height="12" viewBox="0 0 12 12"><rect x="0.6" y="0.6" width="10.8" height="10.8" fill="#fff" stroke="#262626" stroke-width="1.2"/><rect x="2" y="2" width="2" height="2" fill="#262626"/><rect x="2" y="5" width="2" height="2" fill="#262626"/><rect x="2" y="8" width="2" height="2" fill="#262626"/><rect x="5" y="2" width="2" height="2" fill="#262626"/><rect x="5" y="5" width="2" height="2" fill="#262626"/><rect x="5" y="8" width="2" height="2" fill="#262626"/><rect x="8" y="2" width="2" height="2" fill="#262626"/><rect x="8" y="5" width="2" height="2" fill="#262626"/><rect x="8" y="8" width="2" height="2" fill="#262626"/></svg>
<span class="t" style="left:564.50px;top:336.00px;font-size:11px;line-height:11px;transform:scaleX(0.9842);transform-origin:0 0;color:#1E1E1E;font-family:'Liberation Sans', sans-serif;">Query4</span>
<div style="left:612px;top:328px;width:78px;height:29px;background:#EEEEF2;border:1px solid #CCCEDB;box-sizing:border-box"></div>
<svg style="left:625px;top:335px;" width="12" height="12" viewBox="0 0 12 12"><rect x="0.6" y="0.6" width="10.8" height="10.8" fill="#fff" stroke="#262626" stroke-width="1.2"/><rect x="2" y="2" width="2" height="2" fill="#262626"/><rect x="2" y="5" width="2" height="2" fill="#262626"/><rect x="2" y="8" width="2" height="2" fill="#262626"/><rect x="5" y="2" width="2" height="2" fill="#262626"/><rect x="5" y="5" width="2" height="2" fill="#262626"/><rect x="5" y="8" width="2" height="2" fill="#262626"/><rect x="8" y="2" width="2" height="2" fill="#262626"/><rect x="8" y="5" width="2" height="2" fill="#262626"/><rect x="8" y="8" width="2" height="2" fill="#262626"/></svg>
<span class="t" style="left:641.50px;top:336.00px;font-size:11px;line-height:11px;transform:scaleX(0.9842);transform-origin:0 0;color:#1E1E1E;font-family:'Liberation Sans', sans-serif;">Query5</span>
<div style="left:303px;top:356px;width:676px;height:138px;border:1px solid #CCCEDB;box-sizing:border-box;background:#fff"></div>
<div style="left:458px;top:356px;width:78px;height:1px;background:#EEEEF2"></div>
<div style="left:304px;top:357px;width:674px;height:28px;background:#F0F0F0"></div>
<div style="left:965px;top:357px;width:13px;height:28px;background:#EEEEF2"></div>
<svg style="left:312px;top:364px;" width="14" height="15" viewBox="0 0 14 15"><path d="M11.5 8.2 A4.8 4.8 0 1 1 6.7 3.4" fill="none" stroke="#0D4F9E" stroke-width="2"/><path d="M7 0.2 L11.2 3.4 L7 6.6 Z" fill="#0D4F9E"/></svg>
<svg style="left:337px;top:365px;" width="16" height="13" viewBox="0 0 16 13"><path d="M1.5 1 L14.5 12.5 M14.5 1 L1.5 12.5" stroke="#ABABAB" stroke-width="2"/></svg>
<div style="left:361px;top:361px;width:1px;height:20px;background:#CCCEDB"></div>
<svg style="left:370px;top:363px;" width="16" height="15" viewBox="0 0 16 15"><rect x="1" y="6" width="13.5" height="8.3" fill="#ABABAB"/><rect x="2.3" y="7.5" width="2.5" height="5.5" fill="#E4E4E4"/><rect x="5.6" y="7.5" width="2.5" height="5.5" fill="#E4E4E4"/><path d="M1.8 1.5 L9 8.5" stroke="#F0F0F0" stroke-width="4.5"/><path d="M1.8 1.5 L9 8.5" stroke="#ABABAB" stroke-width="2.6"/></svg>
<svg style="left:396px;top:364px;" width="16" height="14" viewBox="0 0 16 14"><path d="M0.5 6.5 L3.5 5.5 L5.5 9 L13 0.2 H15.2 L6.5 13.3 H4 Z" fill="#ABABAB"/></svg>
<svg style="left:422px;top:365px;" width="16" height="13" viewBox="0 0 16 13"><path d="M1.5 1 L14.5 12.5 M14.5 1 L1.5 12.5" stroke="#ABABAB" stroke-width="2"/></svg>
<div style="left:446px;top:361px;width:1px;height:20px;background:#CCCEDB"></div>
<div style="left:450px;top:359px;width:26px;height:24px;border:1px solid #007ACC;box-sizing:border-box;background:#EFEFEF;box-shadow:inset 0 0 0 1px #F6F2EE"></div>
<svg style="left:456px;top:363px;" width="15" height="16" viewBox="0 0 15 16"><rect x="3" y="1" width="3" height="3" fill="#333"/><rect x="3" y="5" width="3" height="3" fill="#333"/><rect x="7" y="1" width="3" height="3" fill="#333"/><rect x="7" y="5" width="3" height="3" fill="#333"/><rect x="11" y="1" width="3" height="3" fill="#333"/><rect x="11" y="5" width="3" height="3" fill="#333"/><path d="M11 9 H14 V12 H12 V11 H11 Z" fill="#333"/><path d="M2 12.3 H9.5" stroke="#333" stroke-width="1.4"/><path d="M3.5 9.8 L1 12.3 L3.5 14.8 M8 9.8 L10.5 12.3 L8 14.8" fill="none" stroke="#333" stroke-width="1.4"/></svg>
<svg style="left:484px;top:366px;" width="11" height="10" viewBox="0 0 11 10"><path d="M7 0.5 V9.5 L0.5 5 Z" fill="#B4B4B4"/><rect x="8.5" y="0.5" width="2" height="9" fill="#B4B4B4"/></svg>
<svg style="left:513px;top:366px;" width="6" height="10" viewBox="0 0 6 10"><path d="M5.5 0.5 V9.5 L0.5 5 Z" fill="#B4B4B4"/></svg>
<div style="left:532px;top:361px;width:64px;height:20px;background:#fff;border:1px solid #CCCEDB;box-sizing:border-box"></div>
<span class="t" style="left:538.00px;top:366.00px;font-size:11px;line-height:11px;transform:scaleX(0.8989);transform-origin:0 0;color:#1E1E1E;font-family:'Liberation Sans', sans-serif;">1000</span>
<svg style="left:584px;top:369px;" width="8" height="5" viewBox="0 0 8 5"><path d="M0 0 H8 L4 4 Z" fill="#6E6E6E"/></svg>
<svg style="left:611px;top:366px;" width="6" height="10" viewBox="0 0 6 10"><path d="M0.5 0.5 V9.5 L5.5 5 Z" fill="#B4B4B4"/></svg>
<svg style="left:634px;top:366px;" width="11" height="10" viewBox="0 0 11 10"><rect x="0.5" y="0.5" width="2" height="9" fill="#B4B4B4"/><path d="M4 0.5 V9.5 L10.5 5 Z" fill="#B4B4B4"/></svg>
<div style="left:655px;top:361px;width:1px;height:20px;background:#CCCEDB"></div>
<div style="left:659px;top:359px;width:26px;height:24px;border:1px solid #007ACC;box-sizing:border-box;background:#EFEFEF;box-shadow:inset 0 0 0 1px #F6F2EE"></div>
<svg style="left:665px;top:364px;" width="13" height="13" viewBox="0 0 13 13"><rect x="0.7" y="0.7" width="11.6" height="11.6" fill="none" stroke="#333" stroke-width="1.4"/><path d="M0.7 4.5 H12.3 M0.7 8.5 H12.3 M4.5 0.7 V12.3 M8.5 0.7 V12.3" stroke="#333" stroke-width="1.2"/></svg>
<svg style="left:691px;top:364px;" width="14" height="14" viewBox="0 0 14 14"><rect x="0.7" y="0.7" width="12.6" height="12.6" fill="none" stroke="#333" stroke-width="1.4"/><rect x="2.8" y="2.8" width="3.4" height="3.4" fill="#333"/><rect x="7.8" y="2.8" width="3.4" height="3.4" fill="#333"/><rect x="2.8" y="7.8" width="3.4" height="3.4" fill="#333"/><rect x="7.8" y="7.8" width="3.4" height="3.4" fill="#333"/></svg>
<div style="left:714px;top:361px;width:1px;height:20px;background:#CCCEDB"></div>
<svg style="left:725px;top:364px;" width="13" height="14" viewBox="0 0 13 14"><rect x="0.7" y="0.7" width="11.6" height="12.6" fill="none" stroke="#333" stroke-width="1.4"/><rect x="0.7" y="0.7" width="11.6" height="2.8" fill="#333"/><path d="M4.5 0.7 V13.3 M8.5 0.7 V13.3" stroke="#333" stroke-width="1.3"/><path d="M2 1.6 L2.7 2.4 L3.4 1.6 M6 1.6 L6.7 2.4 L7.4 1.6 M10 1.6 L10.7 2.4 L11.4 1.6" fill="none" stroke="#fff" stroke-width="0.7"/></svg>
<svg style="left:749px;top:363px;" width="17" height="16" viewBox="0 0 17 16"><circle cx="10" cy="5.4" r="3.4" fill="none" stroke="#333" stroke-width="1.3"/><path d="M12.5 8 L15.3 11" stroke="#333" stroke-width="1.5"/><path d="M4 8 V13" stroke="#0D4F9E" stroke-width="2.2"/><path d="M0.6 11.2 H7.4 L4 15 Z" fill="#0D4F9E"/></svg>
<svg style="left:775px;top:363px;" width="16" height="15" viewBox="0 0 16 15"><rect x="5" y="5" width="10" height="9" fill="#333"/><rect x="6.2" y="7.5" width="2" height="1.5" fill="#fff"/><rect x="6.2" y="9.8" width="2" height="1.5" fill="#fff"/><rect x="6.2" y="12" width="2" height="1.5" fill="#fff"/><rect x="9" y="7.5" width="2" height="1.5" fill="#fff"/><rect x="9" y="9.8" width="2" height="1.5" fill="#fff"/><rect x="9" y="12" width="2" height="1.5" fill="#fff"/><rect x="11.8" y="7.5" width="2" height="1.5" fill="#fff"/><rect x="11.8" y="9.8" width="2" height="1.5" fill="#fff"/><rect x="11.8" y="12" width="2" height="1.5" fill="#fff"/><path d="M2 6.8 Q0.8 3 4.5 2.6 H6" fill="none" stroke="#1A5DB5" stroke-width="1.6"/><path d="M5.2 0.3 L7.5 2.6 L5.2 4.9" fill="none" stroke="#1A5DB5" stroke-width="1.4"/></svg>
<svg style="left:969px;top:372px;" width="8" height="10" viewBox="0 0 8 10"><rect x="0.5" y="0" width="7" height="1.2" fill="#717171"/><path d="M0 4 H8 L4 8 Z" fill="#717171"/></svg>
<div style="left:304px;top:385px;width:674px;height:33px;background:#FBFBFB;border-bottom:1px solid #CCCEDB;box-sizing:border-box"></div>
<div style="left:323px;top:385px;width:1px;height:33px;background:#D8D8E0"></div>
<div style="left:403px;top:385px;width:1px;height:33px;background:#D8D8E0"></div>
<span class="t" style="left:328.00px;top:391.00px;font-size:11px;line-height:11px;transform:scaleX(1.0044);transform-origin:0 0;color:#1E1E1E;font-family:'Liberation Sans', sans-serif;">quarter</span>
<span class="t" style="left:328.00px;top:403.00px;font-size:11px;line-height:11px;transform:scaleX(0.9105);transform-origin:0 0;color:#A0A0A0;font-family:'Liberation Sans', sans-serif;">numeric(0, 0)</span>
<div style="left:305px;top:417px;width:18px;height:22px;background:#FBFBFB"></div>
<svg style="left:312px;top:424px;" width="5" height="9" viewBox="0 0 5 9"><path d="M0.5 0.5 V8.5 L4.5 4.5 Z" fill="#555"/></svg>
<div style="left:323px;top:417px;width:81px;height:22px;background:#E3ECF8;border:1px solid #C5CEE0;box-sizing:border-box"></div>
<span class="t" style="left:394.00px;top:423.00px;font-size:11px;line-height:11px;transform:scaleX(1.0000);transform-origin:0 0;color:#1E1E1E;font-family:'Liberation Sans', sans-serif;">2</span>
<div style="left:305px;top:476px;width:207px;height:16px;background:#FCFCFC"></div>
<svg style="left:308px;top:480px;" width="10" height="8" viewBox="0 0 10 8"><rect x="0" y="0.5" width="1.3" height="7" fill="#B4B4B4"/><path d="M5.5 0.5 V7.5 L1.5 4 Z M9.5 0.5 V7.5 L5.5 4 Z" fill="#B4B4B4"/></svg>
<svg style="left:326px;top:480px;" width="5" height="8" viewBox="0 0 5 8"><path d="M4.5 0.5 V7.5 L0.5 4 Z" fill="#B4B4B4"/></svg>
<span class="t" style="left:357.00px;top:479.00px;font-size:12px;line-height:12px;transform:scaleX(0.8884);transform-origin:0 0;color:#1E1E1E;font-family:'Liberation Sans', sans-serif;">Record 1 of 1</span>
<svg style="left:434px;top:481px;" width="4" height="7" viewBox="0 0 4 7"><path d="M0 0 L3.6 3.5 L0 7 Z" fill="#B4B4B4"/></svg>
<svg style="left:446px;top:481px;" width="10" height="7" viewBox="0 0 10 7"><path d="M0 0 L3.5 3.5 L0 7 Z M3.6 0 L7.1 3.5 L3.6 7 Z" fill="#B4B4B4"/><rect x="7.6" y="0" width="1.3" height="7" fill="#B4B4B4"/></svg>
<svg style="left:460px;top:481px;" width="7" height="7" viewBox="0 0 7 7"><path d="M3.5 0 V7 M0 3.5 H7" stroke="#B4B4B4" stroke-width="1.2"/></svg>
<svg style="left:474px;top:481px;" width="7" height="7" viewBox="0 0 7 7"><path d="M0 3.5 H7" stroke="#B4B4B4" stroke-width="1.2"/></svg>
<svg style="left:487px;top:479px;" width="10" height="9" viewBox="0 0 10 9"><path d="M0.3 5.3 L1.6 4.6 L3.6 7.2 L8.6 0.2 H9.8 L4 8.8 H3 Z" fill="#A8A8A8"/></svg>
<svg style="left:501px;top:481px;" width="9" height="7" viewBox="0 0 9 7"><path d="M1 0.8 L8 6.2 M8 0.8 L1 6.2" stroke="#A0A0A0" stroke-width="2.2"/></svg>
<div style="left:512px;top:476px;width:466px;height:16px;background:#E8E8EC"></div>
<div style="left:512px;top:476px;width:17px;height:16px;background:#DCDCE2"></div>
<svg style="left:517px;top:480px;" width="5" height="8" viewBox="0 0 5 8"><path d="M5 0 V8 L0 4 Z" fill="#8E8E96"/></svg>
<svg style="left:966px;top:480px;" width="5" height="8" viewBox="0 0 5 8"><path d="M0.5 0.5 V7.5 L4.5 4 Z" fill="#9A9AA4"/></svg>
<div style="left:302px;top:495px;width:665px;height:29px;background:#F0F0F0"></div>
<div style="left:304px;top:498px;width:52px;height:24px;border:1px solid #007ACC;box-sizing:border-box;background:#EFEFEF;box-shadow:inset 0 0 0 1px #F6F2EE"></div>
<svg style="left:309px;top:502px;" width="16" height="15" viewBox="0 0 16 15"><rect x="5" y="3" width="5.8" height="8.5" fill="#E8E8EC"/><path d="M4 10.5 V3.8 Q4 2 5.8 2 H13.2 M11.6 3 V11.3 Q11.6 13.1 9.8 13.1 H1.5 M1.6 12.3 Q1.6 11.3 2.8 11.3 H8.5" fill="none" stroke="#333" stroke-width="2"/><path d="M12.5 1 H13.6 Q14.7 1 14.7 2.2 V4 H12.5 Z" fill="#333"/></svg>
<span class="t" style="left:330.00px;top:504.00px;font-size:12px;line-height:12px;transform:scaleX(0.9542);transform-origin:0 0;color:#1E1E1E;font-family:'Liberation Sans', sans-serif;">Text</span>
<div style="left:360px;top:500px;width:1px;height:20px;background:#CCCEDB"></div>
<svg style="left:369px;top:503px;" width="14" height="13" viewBox="0 0 14 13"><path d="M1.5 5 H11" stroke="#333" stroke-width="1.9"/><path d="M1.2 5 L5 2" stroke="#333" stroke-width="1.6"/><path d="M3 9 H12.6" stroke="#333" stroke-width="1.9"/><path d="M12.8 9 L9 12" stroke="#333" stroke-width="1.6"/></svg>
<div style="left:392px;top:500px;width:1px;height:20px;background:#CCCEDB"></div>
<svg style="left:403px;top:504px;" width="12" height="12" viewBox="0 0 12 12"><rect x="0.6" y="0.6" width="10.8" height="10.8" fill="#fff" stroke="#262626" stroke-width="1.2"/><rect x="2" y="2" width="2" height="2" fill="#262626"/><rect x="2" y="5" width="2" height="2" fill="#262626"/><rect x="2" y="8" width="2" height="2" fill="#262626"/><rect x="5" y="2" width="2" height="2" fill="#262626"/><rect x="5" y="5" width="2" height="2" fill="#262626"/><rect x="5" y="8" width="2" height="2" fill="#262626"/><rect x="8" y="2" width="2" height="2" fill="#262626"/><rect x="8" y="5" width="2" height="2" fill="#262626"/><rect x="8" y="8" width="2" height="2" fill="#262626"/></svg>
<span class="t" style="left:422.00px;top:504.00px;font-size:12px;line-height:12px;transform:scaleX(0.9071);transform-origin:0 0;color:#1E1E1E;font-family:'Liberation Sans', sans-serif;">Data</span>
<div style="left:453px;top:500px;width:1px;height:20px;background:#CCCEDB"></div>
<svg style="left:464px;top:504px;" width="11" height="11" viewBox="0 0 11 11"><path d="M5.5 0 V11 M0 5.5 H11" stroke="#333" stroke-width="2"/></svg>
<div style="left:513px;top:500px;width:1px;height:20px;background:#CCCEDB"></div>
<svg style="left:522px;top:502px;" width="16" height="16" viewBox="0 0 16 16"><circle cx="8" cy="8" r="7" fill="#2E9A3E"/><path d="M4.3 8.2 L6.9 11 L11.6 4.9" fill="none" stroke="#fff" stroke-width="2.3"/></svg>
<span class="t" style="left:547.00px;top:504.00px;font-size:12px;line-height:12px;transform:scaleX(0.9795);transform-origin:0 0;color:#1E1E1E;font-family:'Liberation Sans', sans-serif;">Query executed successfully.</span>
<div style="left:707px;top:500px;width:1px;height:20px;background:#CCCEDB"></div>
<span class="t" style="left:715.00px;top:504.00px;font-size:12px;line-height:12px;transform:scaleX(0.8991);transform-origin:0 0;color:#1E1E1E;font-family:'Liberation Sans', sans-serif;">0:00:00.019</span>
<div style="left:780px;top:500px;width:1px;height:20px;background:#CCCEDB"></div>
<span class="t" style="left:788.00px;top:504.00px;font-size:12px;line-height:12px;transform:scaleX(0.9277);transform-origin:0 0;color:#1E1E1E;font-family:'Liberation Sans', sans-serif;">JordanSanders (PostgreSQL 14.0)</span>
<svg style="left:970px;top:510px;" width="8" height="10" viewBox="0 0 8 10"><rect x="0.5" y="0" width="7" height="1.2" fill="#717171"/><path d="M0 4 H8 L4 8 Z" fill="#717171"/></svg>
<svg style="left:9px;top:540px;" width="16" height="16" viewBox="0 0 16 16"><path d="M9.5 1.5 H1.5 V14.3 H9.5" fill="none" stroke="#333" stroke-width="1.1"/><path d="M4 8 H10.5" stroke="#333" stroke-width="2"/><path d="M8.3 4.3 Q11 6.5 15 8 Q11 9.5 8.3 11.5 Q10 8 8.3 4.3 Z" fill="#333"/></svg>
<span class="t" style="left:27.00px;top:543.00px;font-size:11px;line-height:11px;transform:scaleX(1.0296);transform-origin:0 0;color:#1E1E1E;font-family:'Liberation Sans', sans-serif;">Output</span>
<div style="left:6px;top:561px;width:59px;height:4px;background:#C9CAD8"></div>
<div style="left:1px;top:565px;width:982px;height:28px;background:#007ACC"></div>
<span class="t" style="left:770.60px;top:573.00px;font-size:12px;line-height:12px;transform:scaleX(0.9068);transform-origin:0 0;color:#fff;font-family:'Liberation Sans', sans-serif;">Ln</span>
<span class="t" style="left:786.60px;top:573.00px;font-size:12px;line-height:12px;transform:scaleX(1.0000);transform-origin:0 0;color:#fff;font-family:'Liberation Sans', sans-serif;">3</span>
<span class="t" style="left:805.10px;top:573.00px;font-size:12px;line-height:12px;transform:scaleX(0.9383);transform-origin:0 0;color:#fff;font-family:'Liberation Sans', sans-serif;">Col</span>
<span class="t" style="left:825.70px;top:573.00px;font-size:12px;line-height:12px;transform:scaleX(1.0000);transform-origin:0 0;color:#fff;font-family:'Liberation Sans', sans-serif;">1</span>
<span class="t" style="left:843.90px;top:573.00px;font-size:12px;line-height:12px;transform:scaleX(0.9194);transform-origin:0 0;color:#fff;font-family:'Liberation Sans', sans-serif;">Ch</span>
<span class="t" style="left:862.00px;top:573.00px;font-size:12px;line-height:12px;transform:scaleX(1.0000);transform-origin:0 0;color:#fff;font-family:'Liberation Sans', sans-serif;">1</span>
<svg style="left:972px;top:582px;" width="10" height="10" viewBox="0 0 10 10"><rect x="8" y="0" width="1" height="1" fill="#9CC8E8"/><rect x="6" y="2" width="1" height="1" fill="#9CC8E8"/><rect x="8" y="2" width="1" height="1" fill="#9CC8E8"/><rect x="4" y="4" width="1" height="1" fill="#9CC8E8"/><rect x="6" y="4" width="1" height="1" fill="#9CC8E8"/><rect x="8" y="4" width="1" height="1" fill="#9CC8E8"/><rect x="2" y="6" width="1" height="1" fill="#9CC8E8"/><rect x="4" y="6" width="1" height="1" fill="#9CC8E8"/><rect x="6" y="6" width="1" height="1" fill="#9CC8E8"/><rect x="8" y="6" width="1" height="1" fill="#9CC8E8"/><rect x="0" y="8" width="1" height="1" fill="#9CC8E8"/><rect x="2" y="8" width="1" height="1" fill="#9CC8E8"/><rect x="4" y="8" width="1" height="1" fill="#9CC8E8"/><rect x="6" y="8" width="1" height="1" fill="#9CC8E8"/><rect x="8" y="8" width="1" height="1" fill="#9CC8E8"/></svg>
<div style="left:0px;top:0px;width:984px;height:1px;background:#969AB9"></div>
<div style="left:0px;top:593px;width:984px;height:1px;background:#969AB9"></div>
<div style="left:0px;top:0px;width:1px;height:594px;background:#969AB9"></div>
<div style="left:983px;top:0px;width:1px;height:594px;background:#969AB9"></div>
</body></html>
